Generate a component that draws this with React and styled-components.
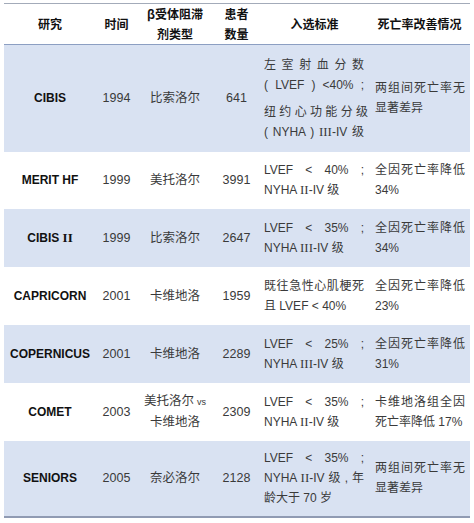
import React from "react";
import styled, { createGlobalStyle } from "styled-components";

const Global = createGlobalStyle`
  html, body { margin: 0; padding: 0; background: #fff; }
  body { font-family: "Liberation Sans", "Noto Sans CJK SC", sans-serif; }
`;

const Page = styled.div`
  padding: 3px 4px 0 4px;
  width: 466px;
`;

const Table = styled.table`
  width: 466px;
  border-collapse: collapse;
  table-layout: fixed;
  border-top: 1px solid #a3abb9;
  border-bottom: 2px solid #909bb3;
  font-size: 12px;
  color: #3a3a3a;
`;

const HeadRow = styled.tr`
  height: 39px;
  border-bottom: 1px solid #8c9fc2;
`;

const Th = styled.th`
  font-family: "Noto Sans CJK SC", sans-serif;
  font-weight: 700;
  font-size: 12px;
  line-height: 20px;
  color: #111;
  text-align: center;
  vertical-align: middle;
  padding: 0 2px;
`;

const Row = styled.tr`
  height: ${(p) => p.$h}px;
  background: ${(p) => (p.$band ? "#d9e2f2" : "#ffffff")};
`;

const NameCell = styled.td`
  font-weight: 700;
  color: #111;
  font-size: 12px;
  text-align: center;
  vertical-align: middle;
  padding: 0;
  white-space: nowrap;
`;

const CenterCell = styled.td`
  text-align: center;
  vertical-align: middle;
  line-height: 20px;
  padding: 0;
  font-size: 12.5px;
`;

const TextCell = styled.td`
  vertical-align: middle;
  line-height: 20px;
  padding: ${(p) => p.$pad};
`;

const Para = styled.div`
  & + & {
    margin-top: 7px;
  }
`;

const Line = styled.div`
  white-space: nowrap;
  text-align: ${(p) => (p.$j ? "justify" : "left")};
  text-align-last: ${(p) => (p.$j ? "justify" : "left")};
`;

const Roman = styled.span`
  font-family: "Liberation Serif", serif;
  font-size: 13px;
`;

const Small = styled.span`
  font-size: 9px;
  margin-left: 3px;
`;

const C5 = "0 5px 0 4px";
const C6 = "0 5px 0 6px";

const nyha = (r, tail) => (
  <>
    NYHA <Roman>{r}</Roman>-IV 级{tail}
  </>
);

const rows = [
  {
    name: "CIBIS",
    year: "1994",
    drug: ["比索洛尔"],
    n: "641",
    h: 107,
    band: true,
    crit: [
      [["左 室 射 血 分 数", true], ["( LVEF ) <40% ;", true]],
      [["纽 约 心 功 能 分 级", true], [<>( NYHA ) <Roman>III</Roman>-IV 级</>, true]],
    ],
    out: [["两组间死亡率无", true], ["显著差异", false]],
  },
  {
    name: "MERIT HF",
    year: "1999",
    drug: ["美托洛尔"],
    n: "3991",
    h: 57,
    crit: [[["LVEF < 40% ;", true], [nyha("II", ""), false]]],
    out: [["全因死亡率降低", true], ["34%", false]],
  },
  {
    name: "CIBIS II",
    year: "1999",
    drug: ["比索洛尔"],
    n: "2647",
    h: 58,
    band: true,
    crit: [[["LVEF < 35% ;", true], [nyha("III", ""), false]]],
    out: [["全因死亡率降低", true], ["34%", false]],
  },
  {
    name: "CAPRICORN",
    year: "2001",
    drug: ["卡维地洛"],
    n: "1959",
    h: 58,
    crit: [[["既往急性心肌梗死", true], ["且 LVEF < 40%", false]]],
    out: [["全因死亡率降低", true], ["23%", false]],
  },
  {
    name: "COPERNICUS",
    year: "2001",
    drug: ["卡维地洛"],
    n: "2289",
    h: 58,
    band: true,
    crit: [[["LVEF < 25% ;", true], [nyha("III", ""), false]]],
    out: [["全因死亡率降低", true], ["31%", false]],
  },
  {
    name: "COMET",
    year: "2003",
    drug: ["美托洛尔", "卡维地洛"],
    vs: true,
    n: "2309",
    h: 58,
    crit: [[["LVEF < 35% ;", true], [nyha("II", ""), false]]],
    out: [["卡维地洛组全因", true], ["死亡率降低 17%", false]],
  },
  {
    name: "SENIORS",
    year: "2005",
    drug: ["奈必洛尔"],
    n: "2128",
    h: 76,
    band: true,
    crit: [[["LVEF < 35% ;", true], [nyha("II", " , 年"), true], ["龄大于 70 岁", false]]],
    out: [["两组间死亡率无", true], ["显著差异", false]],
  },
];

export default function App() {
  return (
    <Page>
      <Global />
      <Table>
        <colgroup>
          <col style={{ width: 92 }} />
          <col style={{ width: 41 }} />
          <col style={{ width: 76 }} />
          <col style={{ width: 47 }} />
          <col style={{ width: 109 }} />
          <col style={{ width: 101 }} />
        </colgroup>
        <thead>
          <HeadRow>
            <Th>研究</Th>
            <Th>时间</Th>
            <Th>
              β受体阻滞
              <br />
              剂类型
            </Th>
            <Th>
              患者
              <br />
              数量
            </Th>
            <Th>入选标准</Th>
            <Th>死亡率改善情况</Th>
          </HeadRow>
        </thead>
        <tbody>
          {rows.map((r) => (
            <Row key={r.name} $h={r.h} $band={r.band}>
              <NameCell>
                {r.name === "CIBIS II" ? (
                  <>
                    CIBIS <Roman>II</Roman>
                  </>
                ) : (
                  r.name
                )}
              </NameCell>
              <CenterCell>{r.year}</CenterCell>
              <CenterCell>
                {r.drug.map((d, i) => (
                  <div key={i}>
                    {d}
                    {r.vs && i === 0 ? <Small>vs</Small> : null}
                  </div>
                ))}
              </CenterCell>
              <CenterCell>{r.n}</CenterCell>
              <TextCell $pad={C5}>
                {r.crit.map((p, i) => (
                  <Para key={i}>
                    {p.map(([t, j], k) => (
                      <Line key={k} $j={j}>
                        {t}
                      </Line>
                    ))}
                  </Para>
                ))}
              </TextCell>
              <TextCell $pad={C6}>
                {r.out.map(([t, j], k) => (
                  <Line key={k} $j={j}>
                    {t}
                  </Line>
                ))}
              </TextCell>
            </Row>
          ))}
        </tbody>
      </Table>
    </Page>
  );
}
